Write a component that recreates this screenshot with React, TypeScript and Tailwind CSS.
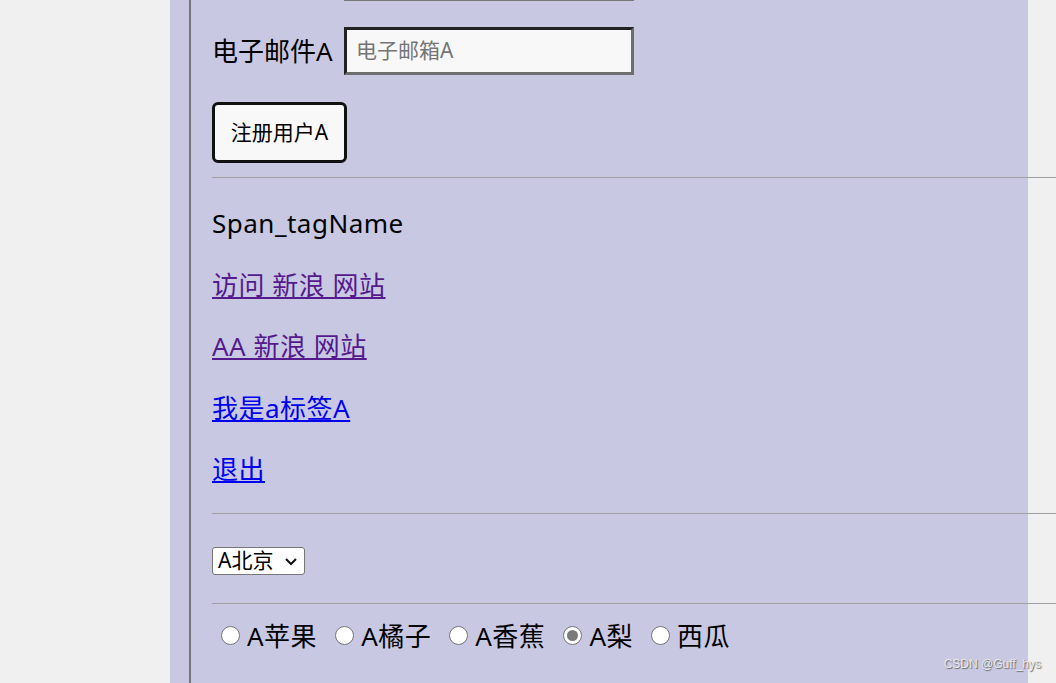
const cjk = { fontFamily: '"Noto Sans", "Noto Sans CJK SC", sans-serif' };

function Rule({ className = "" }: { className?: string }) {
  return <div className={`h-px w-[844px] bg-[#a0a0a0] ${className}`} />;
}

function Radio({ label, checked = false }: { label: string; checked?: boolean }) {
  return (
    <label className="flex items-center">
      <span className="ml-[9px] flex h-[19px] w-[19px] items-center justify-center rounded-full border border-[#767676] bg-white">
        {checked && <span className="h-[11px] w-[11px] rounded-full bg-[#7a7a7a]" />}
      </span>
      <span className="ml-[7px] text-[26px] leading-none tracking-[0.5px] text-black">{label}</span>
    </label>
  );
}

export default function App() {
  return (
    <div className="relative h-[683px] w-[1056px] overflow-hidden bg-[#f0f0f0]" style={cjk}>
      <div className="ml-[170px] h-full w-[858px] bg-[#c8c8e3] pl-[19px]">
        <div className="h-full border-l-2 border-[#777777] pl-[21px]">
          {/* bottom edge of the input above */}
          <div className="ml-[132px] h-px w-[290px] bg-[#777777]" />

          <div className="mt-[26px] flex items-center">
            <span className="w-[132px] text-[26px] leading-none text-black">电子邮件A</span>
            <div className="flex h-[48px] w-[290px] items-center border-[3px] border-t-[#222222] border-l-[#222222] border-b-[#6e6e6e] border-r-[#6e6e6e] bg-[#f8f8f8] pl-[9px] text-[21px] text-[#757575]">
              电子邮箱A
            </div>
          </div>

          <button className="mt-[27px] flex h-[61px] w-[135px] items-center justify-center rounded-[6px] border-[3px] border-[#111111] bg-[#f8f8f8] text-[21px] text-black">
            注册用户A
          </button>

          <Rule className="mt-[14px]" />

          <div className="mt-[15px] flex flex-col text-[26px] tracking-[0.5px]">
            <div className="flex h-[61.5px] items-center text-black">Span_tagName</div>
            <div className="flex h-[61.5px] items-center">
              <a href="#" className="text-[#551a8b] underline">访问 新浪 网站</a>
            </div>
            <div className="flex h-[61.5px] items-center">
              <a href="#" className="text-[#551a8b] underline">AA 新浪 网站</a>
            </div>
            <div className="flex h-[61.5px] items-center">
              <a href="#" className="text-[#0000ee] underline">我是a标签A</a>
            </div>
            <div className="flex h-[61.5px] items-center">
              <a href="#" className="text-[#0000ee] underline">退出</a>
            </div>
          </div>

          <Rule className="mt-[12px]" />

          <div className="mt-[33px] flex h-[28px] w-[93px] items-center justify-between rounded-[3px] border border-[#767676] bg-white pl-[5px] pr-[6px] text-[21px] text-black">
            <span className="leading-none">A北京</span>
            <svg width="14" height="10" viewBox="0 0 14 10" fill="none">
              <path d="M2 3l5 5 5-5" stroke="#111" strokeWidth="2" />
            </svg>
          </div>

          <Rule className="mt-[28px]" />

          <div className="flex h-[64px] items-center gap-[9px]">
            <Radio label="A苹果" />
            <Radio label="A橘子" />
            <Radio label="A香蕉" />
            <Radio label="A梨" checked />
            <Radio label="西瓜" />
          </div>
        </div>
      </div>

      <div
        className="absolute right-[15px] bottom-[10px] text-[12px] text-[#e8e8e8]"
        style={{ fontFamily: '"Liberation Sans", Arial, sans-serif', textShadow: "1px 1px 1px #666" }}
      >
        CSDN @Guff_hys
      </div>
    </div>
  );
}
